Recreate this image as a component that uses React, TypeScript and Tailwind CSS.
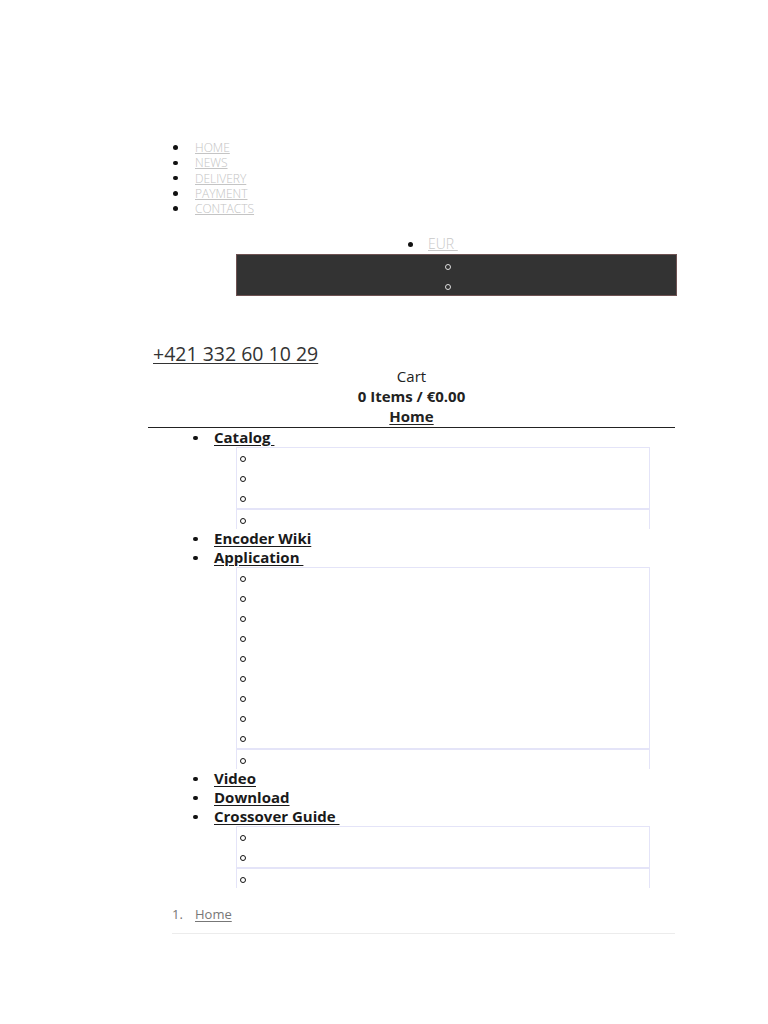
import React from "react";

const topLinks = ["HOME", "NEWS", "DELIVERY", "PAYMENT", "CONTACTS"];

const Disc: React.FC<{ className?: string }> = ({ className = "" }) => (
  <span className={`inline-block w-[4.5px] h-[4.5px] rounded-full shrink-0 ${className}`} />
);

const Circle: React.FC<{ className?: string }> = ({ className = "" }) => (
  <span className={`inline-block w-[6px] h-[6px] rounded-full border shrink-0 ${className}`} />
);

const SubRow: React.FC = () => (
  <li className="h-[20px] flex items-center pl-[3px]">
    <Circle className="border-[#111] translate-y-[1px]" />
  </li>
);

// dropdown remains: one framed block plus a clipped second block
const SubMenu: React.FC<{ rows: number }> = ({ rows }) => (
  <div className="ml-[88px] w-[414px]">
    <ul className="border border-[#e4e4f8]">
      {Array.from({ length: rows }).map((_, i) => (
        <SubRow key={i} />
      ))}
    </ul>
    <ul className="h-[20px] overflow-hidden border-x border-t border-[#e4e4f8]">
      <SubRow />
    </ul>
  </div>
);

const NavItem: React.FC<{ label: string; sub?: number }> = ({ label, sub }) => (
  <li>
    <div className="h-[19px] flex items-center">
      <Disc className="bg-[#111] ml-[45px] mr-[16.5px]" />
      <a href="#" className="text-[15px] font-bold text-[#1a1a1a] underline underline-offset-2 leading-[19px]">
        {label}
      </a>
    </div>
    {sub ? <SubMenu rows={sub} /> : null}
  </li>
);

export default function App() {
  return (
    <div className="min-h-[1024px] bg-white" style={{ fontFamily: '"Open Sans", "Liberation Sans", sans-serif' }}>
      <div className="ml-[148px] w-[527px] pt-[140px] pb-10">
        <ul>
          {topLinks.map(l => (
            <li key={l} className="flex items-center h-[15.25px]">
              <Disc className="bg-[#111] ml-[25px] mr-[17.5px]" />
              <a href="#" className="text-[12px] font-light leading-[15.25px] text-[#c4c4c4] underline underline-offset-1">
                {l}
              </a>
            </li>
          ))}
        </ul>

        <div className="mt-[18px] h-[20px] flex items-center">
          <Disc className="bg-[#111] ml-[260px] mr-[15.5px]" />
          <a href="#" className="text-[14px] font-light leading-[20px] text-[#c8c8c8] underline underline-offset-1">
            EUR&nbsp;
          </a>
        </div>
        <ul className="ml-[88px] w-[441px] bg-[#333333] border border-[#6e5252]">
          {[0, 1].map(i => (
            <li key={i} className="h-[20px] flex items-center justify-center">
              <Circle className="border-[#dddddd] translate-y-[2px] -translate-x-[9px]" />
            </li>
          ))}
        </ul>

        <div className="mt-[48px] h-[20px] pl-[5px] flex items-center">
          <a href="#" className="text-[19.5px] leading-[20px] text-[#333] underline underline-offset-2">
            +421 332 60 10 29
          </a>
        </div>

        <div className="mt-[2px] text-center text-[15px] leading-[20px] text-[#222]">
          <div>Cart</div>
          <div className="font-bold">0 Items / €0.00</div>
          <a href="#" className="font-bold underline underline-offset-2">
            Home
          </a>
        </div>
        <div className="mt-[1px] h-px bg-[#222]" />

        <ul>
          <NavItem label={"Catalog\u00a0"} sub={3} />
          <NavItem label="Encoder Wiki" />
          <NavItem label={"Application\u00a0"} sub={9} />
          <NavItem label="Video" />
          <NavItem label="Download" />
          <NavItem label={"Crossover Guide\u00a0"} sub={2} />
        </ul>

        <ol className="mt-[16px] ml-[24px] h-[20px] flex items-center text-[13px] text-[#777]">
          <li className="flex items-center">
            <span className="w-[23px]">1.</span>
            <a href="#" className="underline underline-offset-2">
              Home
            </a>
          </li>
        </ol>
        <div className="mt-[9px] ml-[24px] h-px bg-[#ececec]" />
      </div>
    </div>
  );
}
